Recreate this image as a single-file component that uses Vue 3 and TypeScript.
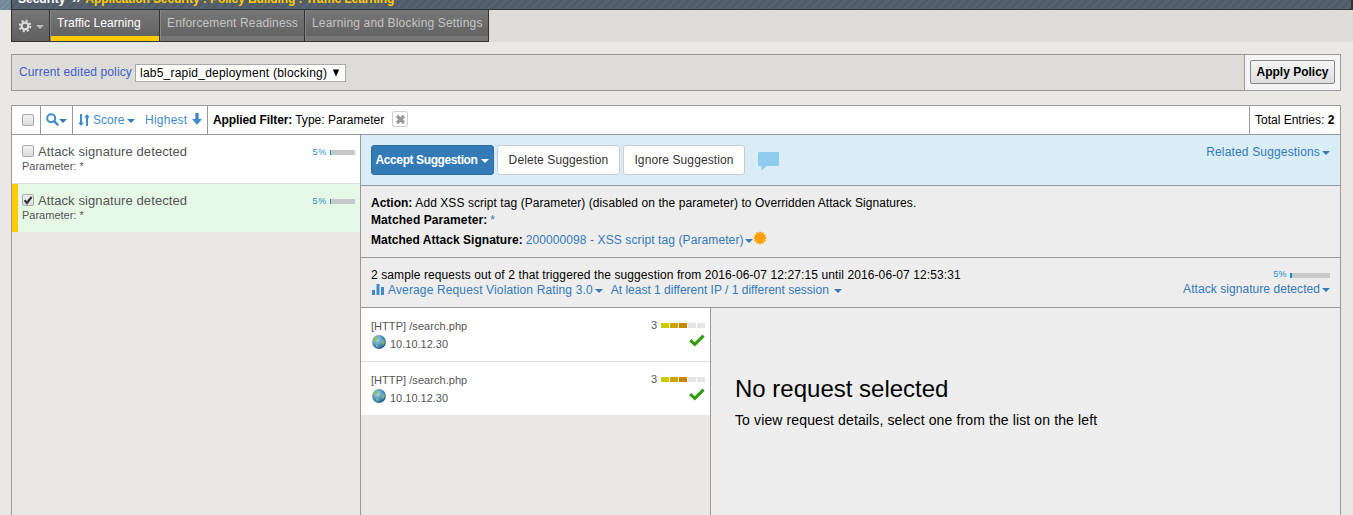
<script setup lang="ts">
interface Suggestion { title: string; detail: string; score: string; selected: boolean }
interface Sample { url: string; ip: string; rating: number }

const suggestions: Suggestion[] = [
  { title: 'Attack signature detected', detail: 'Parameter: *', score: '5%', selected: false },
  { title: 'Attack signature detected', detail: 'Parameter: *', score: '5%', selected: true },
]
const samples: Sample[] = [
  { url: '[HTTP] /search.php', ip: '10.10.12.30', rating: 3 },
  { url: '[HTTP] /search.php', ip: '10.10.12.30', rating: 3 },
]
const tabs: { label: string; cls: string }[] = [
  { label: 'Traffic Learning', cls: 'tab-traffic' },
  { label: 'Enforcement Readiness', cls: 'tab-ready' },
  { label: 'Learning and Blocking Settings', cls: 'tab-settings' },
]
const sunPoints: string = Array.from({ length: 24 }, (_, i) => {
  const r = i % 2 ? 5.1 : 7
  const a = (i * Math.PI) / 12
  return `${(7 + r * Math.cos(a)).toFixed(2)},${(7 + r * Math.sin(a)).toFixed(2)}`
}).join(' ')
</script>

<template>
  <div class="page">
    <header class="crumbs">
      <div class="crumb-bar"><div class="crumb-text"><b class="c1">Security</b><b class="c2">››</b><b class="c3">Application Security : Policy Building : Traffic Learning</b></div></div>
    </header>

    <nav class="navrow">
      <div class="tabs">
        <div class="gear">
          <svg width="14" height="14" viewBox="0 0 14 14"><g fill="none" stroke="#ddd"><circle cx="7" cy="7" r="3.4" stroke-width="2.2" /><circle cx="7" cy="7" r="5.3" stroke-width="2" stroke-dasharray="2.08 2.08" /></g></svg>
          <i class="caret light"></i>
        </div>
        <div v-for="(t, i) in tabs" :key="t.label" class="tab" :class="[t.cls, { active: i === 0 }]"><span>{{ t.label }}</span></div>
      </div>
    </nav>

    <section class="policy">
      <span class="policy-label">Current edited policy</span>
      <div class="select"><span>lab5_rapid_deployment (blocking)</span><svg width="8" height="8" viewBox="0 0 8 8"><path d="M0.8 0.5H7.2L4 7.5Z" fill="#000" /></svg></div>
      <div class="apply"><button class="apply-btn"><span>Apply Policy</span></button></div>
    </section>

    <section class="panel">
      <div class="toolbar">
        <div class="cell cb"><i class="check"></i></div>
        <div class="cell search">
          <svg width="13" height="13" viewBox="0 0 13 13" fill="none" stroke="#428bca"><circle cx="5.2" cy="5.2" r="4" stroke-width="2" /><path d="M8.1 8.1L11.6 11.6" stroke-width="2.4" stroke-linecap="round" /></svg>
          <i class="caret"></i>
        </div>
        <div class="cell sort">
          <svg class="updown" width="12" height="12" viewBox="0 0 12 12" fill="#428bca"><path d="M2 0H4V8.5H5.8L3 12L0.2 8.5H2ZM8 12V3.5H6.2L9 0L11.8 3.5H10V12Z" /></svg>
          <span class="score">Score</span><i class="caret"></i>
          <span class="highest">Highest</span>
          <svg class="down" width="10" height="12" viewBox="0 0 10 12" fill="#428bca"><path d="M3.3 0H6.7V6H10L5 12L0 6H3.3Z" /></svg>
        </div>
        <div class="filter"><b>Applied Filter:</b><span class="ftype">Type: Parameter</span>
          <i class="clear"><svg width="11" height="11" viewBox="0 0 11 11"><path d="M2 2L9 9M9 2L2 9" stroke="#999" stroke-width="3.2" /></svg></i>
        </div>
        <div class="total"><span>Total Entries: <b>2</b></span></div>
      </div>

      <div class="body">
        <aside class="list">
          <div v-for="(s, i) in suggestions" :key="i" class="item" :class="{ sel: s.selected }">
            <div class="item-top">
              <i class="check"><svg v-if="s.selected" width="10" height="10" viewBox="0 0 10 10"><path d="M1.6 5.3L4 8L8.6 1.8" fill="none" stroke="#333" stroke-width="2.2" /></svg></i>
              <span class="title">{{ s.title }}</span>
              <span class="pct">{{ s.score }}</span><i class="bar small"></i>
            </div>
            <div class="detail">{{ s.detail }}</div>
          </div>
        </aside>

        <main class="main">
          <div class="actions">
            <button class="btn primary"><span>Accept Suggestion</span><i class="caret white"></i></button>
            <button class="btn del"><span>Delete Suggestion</span></button>
            <button class="btn ign"><span>Ignore Suggestion</span></button>
            <svg class="bubble" width="21" height="19" viewBox="0 0 21 19"><path d="M1.5 0H19.5Q21 0 21 1.5V12.5Q21 14 19.5 14H8.5L3.5 18.7V14H1.5Q0 14 0 12.5V1.5Q0 0 1.5 0Z" fill="#8fcbef" /></svg>
            <div class="related link"><span>Related Suggestions</span><i class="caret"></i></div>
          </div>

          <div class="info">
            <div class="line l1"><b>Action:</b> <span>Add XSS script tag (Parameter) (disabled on the parameter) to Overridden Attack Signatures.</span></div>
            <div class="line l2"><b>Matched Parameter:</b> <span class="link">*</span></div>
            <div class="line l3"><b>Matched Attack Signature:</b><span class="link sig">200000098 - XSS script tag (Parameter)</span><i class="caret"></i><svg class="sun" width="14" height="14" viewBox="0 0 14 14"><polygon :points="sunPoints" fill="#ff9f00" /></svg></div>
          </div>

          <div class="summary">
            <div class="sum-left">
              <div class="sum-text"><span>2 sample requests out of 2 that triggered the suggestion from 2016-06-07 12:27:15 until 2016-06-07 12:53:31</span></div>
              <div class="sum-links link">
                <svg width="12" height="12" viewBox="0 0 12 12" fill="#428bca"><path d="M0 6H3V11H0ZM4.5 0H7.5V11H4.5ZM9 3H12V11H9Z" /></svg>
                <span class="avg">Average Request Violation Rating 3.0</span><i class="caret"></i>
                <span class="least">At least 1 different IP / 1 different session</span><i class="caret last"></i>
              </div>
            </div>
            <div class="sum-right">
              <div class="sum-score"><span class="pct">5%</span><i class="bar wide"></i></div>
              <div class="detected link"><span>Attack signature detected</span><i class="caret"></i></div>
            </div>
          </div>

          <div class="lower">
            <div class="samples">
              <div v-for="(r, i) in samples" :key="i" class="sample">
                <div class="s-left">
                  <div class="url">{{ r.url }}</div>
                  <div class="ip">
                    <svg width="14" height="14" viewBox="0 0 14 14">
                      <defs><radialGradient :id="'globe' + i" cx=".38" cy=".35" r=".7"><stop offset="0" stop-color="#a9d4ee" /><stop offset=".6" stop-color="#4a8fc6" /><stop offset="1" stop-color="#255684" /></radialGradient></defs>
                      <circle cx="7" cy="7" r="6.9" :fill="'url(#globe' + i + ')'" />
                      <path d="M1 5Q2 2 5 1L7 2L6 4L4.5 5L4 7L2 8ZM9.5 6L12 4.5L13 7L11.5 10L10 9ZM3.5 9L6.5 10L6 12.5L4.5 12Z" fill="#8cc05a" opacity=".8" />
                    </svg><span>{{ r.ip }}</span>
                  </div>
                </div>
                <div class="s-right">
                  <div class="rating"><span>{{ r.rating }}</span><i class="r1"></i><i class="r2"></i><i class="r3"></i><i></i><i></i></div>
                  <svg class="tick" width="16" height="13" viewBox="0 0 16 13"><path d="M1.2 6.2L5.8 10.4L14.6 1.6" fill="none" stroke="#2f9e0c" stroke-width="3" /></svg>
                </div>
              </div>
            </div>
            <div class="empty">
              <h1><span>No request selected</span></h1>
              <p><span>To view request details, select one from the list on the left</span></p>
            </div>
          </div>
        </main>
      </div>
    </section>
  </div>
</template>

<style>
html, body { margin: 0; overflow: hidden; }
</style>

<style scoped>
.page { box-sizing: border-box; width: 1353px; height: 515px; overflow: hidden; background: #e9e8e4; font: 12px/16px "Liberation Sans", Arial, sans-serif; color: #000; display: flex; flex-direction: column; }
.page * { box-sizing: border-box; white-space: nowrap; }
span, b { display: inline-block; }
i { display: block; flex: none; font-style: normal; }
svg { display: block; flex: none; }
button { font: inherit; padding: 0; margin: 0; }
.link { color: #337ab7; }
.caret { width: 0; height: 0; border: 4px solid transparent; border-top-color: #337ab7; border-bottom: 0; }

.crumbs { height: 10px; flex: none; background: repeating-linear-gradient(135deg, #72869a 0 2px, #7b8fa2 2px 4px); padding-left: 11px; }
.crumb-bar { height: 10px; background: repeating-linear-gradient(135deg, #56626f 0 3px, #505c68 3px 6px); border: 1px solid #333; border-width: 0 2px 1px 1px; overflow: hidden; }
.crumb-text { display: flex; margin-top: -8px; padding-left: 6px; font-size: 12px; line-height: 14px; color: #fff; }
.c2 { margin-left: 7px; }
.c3 { margin-left: 5px; color: #fc0; letter-spacing: -.09px; }

.navrow { height: 32px; flex: none; margin-left: 11px; background: #dddcd8; }
.tabs { display: flex; width: 478px; height: 32px; border: 1px solid #333; border-top: 0; }
.gear { width: 37px; display: flex; align-items: center; padding-left: 6px; background: linear-gradient(#777, #606060); }
.caret.light { border-top-color: #bbb; margin: 3px 0 0 4px; }
.tab { border-left: 1px solid #333; background: linear-gradient(#777, #636363 26px, #777 26px); color: #c4c4c4; padding: 5px 0 0 7px; line-height: 16px; box-shadow: inset 1px 0 #888; }
.tab-traffic { width: 110px; letter-spacing: .06px; }
.tab-ready { width: 145px; letter-spacing: .14px; }
.tab-settings { width: 184px; letter-spacing: .17px; }
.tab.active { color: #fff; background: linear-gradient(#777, #636363 26px, #fc0 26px); }

.policy { height: 37px; flex: none; margin: 12px 12px 0 11px; border: 1px solid #999; background: #dddcd8; display: flex; align-items: center; padding-left: 7px; }
.policy-label { color: #4060c8; width: 116px; letter-spacing: .14px; margin-top: -1px; }
.select { width: 211px; height: 18px; border: 1px solid #a9a9a9; background: #fff; display: flex; align-items: center; justify-content: space-between; padding: 0 5px 0 4px; letter-spacing: .22px; }
.apply { margin-left: auto; width: 96px; height: 35px; border-left: 1px solid #999; background: #f5f5f5; padding: 5px; }
.apply-btn { width: 85px; height: 24px; border: 1px solid #888; border-radius: 2px; background: linear-gradient(#f5f5f5, #ddd); font-weight: bold; }

.panel { flex: 1; min-height: 0; margin: 14px 12px 0 11px; border: 1px solid #999; border-bottom: 0; display: flex; flex-direction: column; }
.toolbar { height: 29px; flex: none; background: #fff; border-bottom: 1px solid #999; display: flex; }
.cell { border-right: 1px solid #999; display: flex; align-items: center; color: #428bca; }
.check { width: 12px; height: 12px; border: 1px solid #aaa; border-radius: 2px; background: linear-gradient(#f0f0f0, #dcdcdc); }
.cb { width: 29px; padding-left: 10px; }
.search { width: 32px; padding-left: 5px; }
.search svg { margin-top: -2px; }
.search .caret { margin: 2px 0 0 0; }
.sort { width: 135px; padding-left: 5px; }
.updown { margin-top: -1px; }
.score { width: 34px; margin-left: 3px; }
.sort .caret { margin-top: 2px; }
.highest { margin-left: 10px; width: 47px; letter-spacing: .25px; }
.down { margin-top: -2px; }
.filter { display: flex; align-items: center; padding-left: 5px; }
.filter b { letter-spacing: -.1px; }
.ftype { margin-left: 3px; letter-spacing: .03px; }
.clear { width: 16px; height: 16px; margin: -2px 0 0 8px; border: 1px solid #ccc; border-radius: 3px; display: flex; align-items: center; justify-content: center; }
.total { margin-left: auto; width: 91px; border-left: 1px solid #999; display: flex; align-items: center; padding-left: 5px; }

.body { flex: 1; display: flex; min-height: 0; }
.list { width: 348px; flex: none; }
.item { height: 49px; background: #fff; border-bottom: 1px solid #ddd; padding: 9px 5px 0 10px; color: #555; }
.item.sel { height: 48px; background: #e5f7e5; border-bottom: 0; border-left: 6px solid #fc0; padding-left: 4px; }
.item-top { display: flex; align-items: center; height: 16px; }
.item-top .check { margin-top: -2px; }
.title { font-size: 13px; margin-left: 4px; letter-spacing: .1px; }
.pct { color: #2a90c0; font-size: 9px; letter-spacing: .7px; }
.item-top .pct { margin-left: auto; }
.bar { height: 5px; background: #c8c8c8; border-left: 1px solid #0a94c8; }
.small { width: 25px; margin: 1px 0 0 3px; }
.detail { font-size: 11px; line-height: 14px; margin-top: -1px; }

.main { flex: 1; border-left: 1px solid #999; display: flex; flex-direction: column; background: #ededed; }
.actions { height: 51px; flex: none; background: #d9edf7; border-bottom: 1px solid #999; display: flex; padding: 10px 10px 0; }
.btn { height: 30px; border: 1px solid #ccc; border-radius: 3px; background: #fff; color: #333; display: flex; align-items: center; justify-content: center; letter-spacing: .1px; }
.primary { width: 123px; background: #337ab7; border-color: #2e6da4; color: #fff; font-weight: bold; letter-spacing: -.4px; }
.white { border-top-color: #fff; margin: 2px 0 0 4px; }
.del { width: 123px; margin-left: 3px; }
.ign { width: 122px; margin-left: 3px; }
.bubble { margin: 7px 0 0 13px; }
.related { margin: -1px 0 0 auto; display: flex; height: 16px; align-items: center; letter-spacing: .16px; }
.related .caret, .detected .caret { margin: 2px 0 0 2px; }

.info { height: 72px; flex: none; border-bottom: 1px solid #999; padding: 8px 0 0 10px; }
.line { display: flex; align-items: center; height: 17px; gap: 3px; }
.l1 span { letter-spacing: .067px; }
.l2 b { letter-spacing: .09px; }
.l3 { margin-top: 3px; gap: 0; }
.l3 b { letter-spacing: .03px; }
.sig { margin-left: 3px; letter-spacing: .1px; }
.l3 .caret { margin: 2px 0 0 1px; }
.sun { margin: -4px 0 0 0; }

.summary { height: 50px; flex: none; border-bottom: 1px solid #999; display: flex; justify-content: space-between; padding: 9px 10px 0; }
.sum-text { height: 15px; letter-spacing: .1px; }
.sum-links { display: flex; align-items: center; height: 16px; padding-left: 1px; }
.avg { margin-left: 4px; letter-spacing: .14px; }
.sum-links .caret { margin: 2px 0 0 2px; }
.least { margin-left: 8px; }
.sum-links .last { margin-left: 5px; }
.sum-score { display: flex; justify-content: flex-end; align-items: center; height: 14px; }
.sum-score .pct { letter-spacing: .4px; }
.wide { width: 40px; border-left-width: 2px; margin: 2px 0 0 3px; }
.detected { display: flex; align-items: center; height: 16px; letter-spacing: .06px; }

.lower { flex: 1; display: flex; min-height: 0; }
.samples { width: 350px; border-right: 1px solid #999; background: #e9e8e4; }
.sample { height: 54px; background: #fff; border-bottom: 1px solid #ddd; display: flex; justify-content: space-between; padding: 10px 5px 0 10px; font-size: 11px; color: #555; }
.sample:last-child { border-bottom: 0; height: 53px; }
.url { height: 16px; letter-spacing: .05px; }
.ip { display: flex; align-items: center; height: 18px; }
.ip svg { margin: -2px 4px 0 1px; }
.ip span { padding-top: 2px; }
.rating { display: flex; align-items: center; height: 14px; }
.rating span { margin-right: 3px; }
.rating i { width: 8px; height: 5px; margin-left: 1px; background: #e4e4e4; }
.rating .r1 { background: #cc0; }
.rating .r2 { background: #cca300; }
.rating .r3 { background: #cc8500; }
.tick { margin: 2px 0 0 auto; }
.empty { padding: 66px 0 0 24px; }
h1 { font-size: 24px; font-weight: normal; line-height: 30px; margin: 0; }
p { font-size: 14px; line-height: 18px; margin: 7px 0 0; letter-spacing: .12px; }
</style>
